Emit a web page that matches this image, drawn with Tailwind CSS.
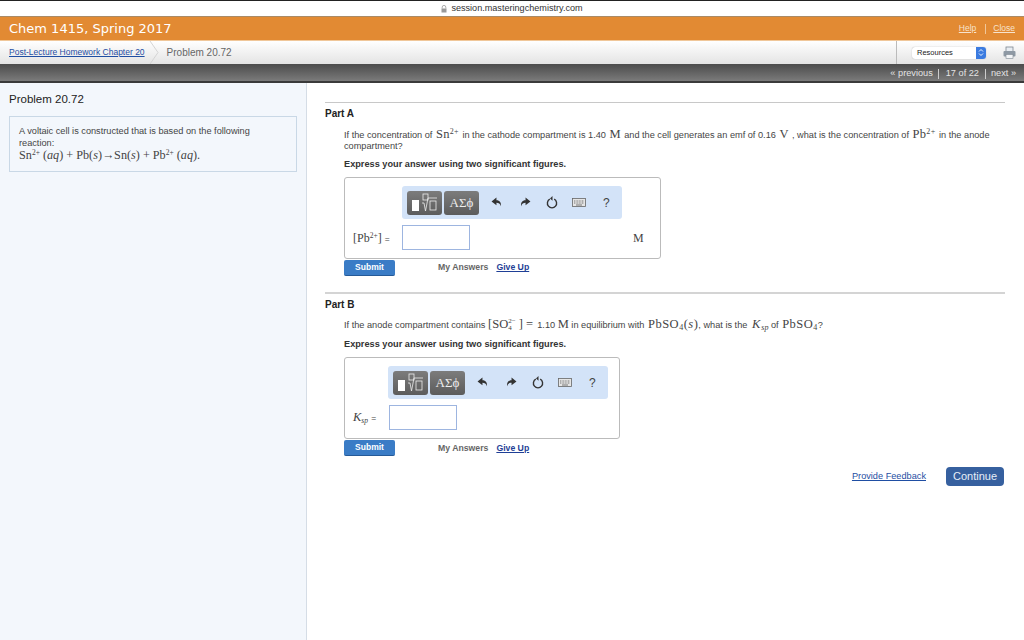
<!DOCTYPE html>
<html lang="en">
<head>
    <meta charset="UTF-8">
    <title>Chem 1415, Spring 2017</title>
    <script src="https://cdn.jsdelivr.net/npm/@tailwindcss/browser@4"></script>
</head>
<body class="bg-white font-['Liberation_Sans',sans-serif] text-[#333]">
<div class="flex flex-col w-[1024px] h-[640px] overflow-hidden">

    <!-- browser address bar -->
    <div class="h-[16px] bg-white border-t border-[#222] flex items-center justify-center gap-[4px] text-[9.1px] text-[#333]">
        <svg width="6" height="8" viewBox="0 0 6 8"><path d="M1.2 3.5V2.2a1.8 1.8 0 0 1 3.6 0V3.5" fill="none" stroke="#999" stroke-width="0.8"/><rect x="0.5" y="3.5" width="5" height="4" fill="#999"/></svg>
        <span>session.masteringchemistry.com</span>
    </div>

    <!-- course header -->
    <div class="h-[25px] bg-[#e28a33] border-t border-[#a98a66] border-b-[#f0c79a] border-b flex items-center justify-between pl-[9px] pr-[9px]">
        <span class="font-['DejaVu_Sans',sans-serif] text-[13px] text-white">Chem 1415, Spring 2017</span>
        <div class="flex items-center text-[8.5px] text-[#f7e3cd]">
            <a class="underline">Help</a>
            <span class="w-px h-[10px] bg-[#f0c79a] ml-[9px] mr-[7px]"></span>
            <a class="underline">Close</a>
        </div>
    </div>

    <!-- breadcrumb -->
    <div class="h-[23px] bg-gradient-to-b from-white to-[#e4e4e4] flex items-center justify-between">
        <div class="flex items-center h-full pl-[9px]">
            <a class="text-[8.5px] text-[#1f4ea3] underline">Post-Lecture Homework Chapter 20</a>
            <svg class="ml-[4px]" width="10" height="23" viewBox="0 0 10 23"><path d="M1 0l8 11.5L1 23" fill="none" stroke="#d4d4d4"/></svg>
            <span class="ml-[8px] text-[10px] text-[#666]">Problem 20.72</span>
        </div>
        <div class="flex items-center h-full border-l border-[#bbb] pl-[15px] pr-[8px]">
            <div class="w-[74px] h-[12px] bg-white rounded-[3px] flex items-center justify-between text-[7.5px] text-[#222] pl-[5px] shadow-[0_0_1px_#999]">
                <span>Resources</span>
                <span class="w-[10px] h-full bg-[#3b7be0] rounded-r-[3px] flex items-center justify-center">
                    <svg width="6" height="9" viewBox="0 0 6 9"><path d="M1 3.5l2-2 2 2M1 5.5l2 2 2-2" fill="none" stroke="#fff" stroke-width="0.9"/></svg>
                </span>
            </div>
            <svg class="ml-[17px]" width="13" height="13" viewBox="0 0 13 13"><rect x="3" y="1" width="7" height="5" fill="#e8edf2" stroke="#7d8791" stroke-width="0.8"/><rect x="0.5" y="5" width="12" height="5.5" rx="1" fill="#8e99a4"/><rect x="3" y="8.5" width="7" height="4" fill="#f2f4f6" stroke="#7d8791" stroke-width="0.6"/></svg>
        </div>
    </div>

    <!-- pager bar -->
    <div class="h-[19px] bg-gradient-to-b from-[#4c4c4c] to-[#7b7b7b] border-b-2 border-[#3a3a3a] flex items-center justify-end pr-[8px] pt-[2px] text-[9.2px] text-[#e4e4e4]">
        <span>« previous</span>
        <span class="w-px h-[10px] bg-[#ccc] ml-[5px] mr-[7px]"></span>
        <span>17 of 22</span>
        <span class="w-px h-[10px] bg-[#ccc] ml-[6px] mr-[5px]"></span>
        <span>next »</span>
    </div>

    <div class="flex flex-1 min-h-0">

        <!-- problem sidebar -->
        <div class="w-[307px] bg-[#f3f7fc] border-r border-[#d5dde6] pl-[9px] pr-[9px]">
            <h1 class="text-[11.5px] leading-[14px] mt-[9px] text-[#222]">Problem 20.72</h1>
            <div class="mt-[10px] h-[56px] bg-[#f3f7fc] border border-[#c9d8e6] pl-[9px] pt-[9px] text-[9.2px] leading-[11.5px] text-[#444]">
                <p>A voltaic cell is constructed that is based on the following<br>reaction:</p>
                <p class="font-['Liberation_Serif',serif] text-[12.2px] leading-[12px] text-[#444]">Sn<sup class="text-[7.5px]">2+</sup> (<i>aq</i>) + Pb(<i>s</i>)→Sn(<i>s</i>) + Pb<sup class="text-[7.5px]">2+</sup> (<i>aq</i>).</p>
            </div>
        </div>

        <!-- parts -->
        <div class="flex-1 pl-[18px] pr-[19px] pt-[19px]">

            <!-- part A -->
            <div class="border-t border-[#c8c8c8]">
                <h2 class="text-[10px] font-bold leading-[12px] mt-[5px] text-[#222]">Part A</h2>
                <div class="ml-[19px]">
                    <p class="mt-[9px] w-[650px] text-[9.2px] leading-[11px] text-[#444]">If the concentration of <span class="mx-[1px] font-['Liberation_Serif',serif] text-[12.5px] tracking-[0.3px]">Sn<sup class="text-[8px]">2+</sup></span> in the cathode compartment is 1.40 <span class="mx-[1px] font-['Liberation_Serif',serif] text-[12.5px]">M</span> and the cell generates an emf of 0.16 <span class="mx-[1px] font-['Liberation_Serif',serif] text-[12.5px]">V</span> , what is the concentration of <span class="mx-[1px] font-['Liberation_Serif',serif] text-[12.5px] tracking-[0.3px]">Pb<sup class="text-[8px]">2+</sup></span> in the anode compartment?</p>
                    <p class="mt-[7px] text-[9.2px] leading-[11px] font-bold text-[#333]">Express your answer using two significant figures.</p>

                    <div class="mt-[7px] w-[317px] h-[82px] bg-white border border-[#bbb] rounded-[3px] pt-[8px]">
                        <div class="ml-[57px] w-[220px] h-[33px] bg-[#d3e3f8] rounded-[3px] flex items-center pl-[5px]">
                            <div class="w-[35px] h-[24px] bg-gradient-to-b from-[#7c7c7c] to-[#5c5c5c] rounded-[3px] flex items-center justify-center">
                                <svg width="29" height="20" viewBox="0 0 29 20"><rect x="2" y="7" width="7" height="11" fill="#fff"/><rect x="13" y="1" width="5" height="6" fill="none" stroke="#eee" stroke-width="0.8"/><path d="M12 10l2 0 1.5 8 2.5-13h9" fill="none" stroke="#eee" stroke-width="0.8"/><rect x="20" y="8" width="6" height="9" fill="none" stroke="#eee" stroke-width="0.8"/></svg>
                            </div>
                            <div class="ml-[2px] w-[35px] h-[24px] bg-gradient-to-b from-[#7c7c7c] to-[#5c5c5c] rounded-[3px] flex items-center justify-center font-['Liberation_Serif',serif] text-[13px] text-[#eee]">ΑΣϕ</div>
                            <svg class="ml-[12px]" width="12" height="11" viewBox="0 0 11 10"><path d="M5 0.5L0.5 4 5 7.5V5.3c2 0 3.4.8 4 3.2.6-3.2-1-5.5-4-5.5z" fill="#333"/></svg>
                            <svg class="ml-[16px]" width="12" height="11" viewBox="0 0 11 10"><path d="M6 0.5L10.5 4 6 7.5V5.3c-2 0-3.4.8-4 3.2-.6-3.2 1-5.5 4-5.5z" fill="#333"/></svg>
                            <svg class="ml-[15px]" width="12" height="13" viewBox="0 0 12 13"><path d="M3.8 3.2a4.6 4.6 0 1 0 4.4 0" fill="none" stroke="#333" stroke-width="1.4"/><path d="M6.5 0v4.8L4 2.4z" fill="#333"/></svg>
                            <svg class="ml-[14px]" width="14" height="9" viewBox="0 0 14 9"><rect x="0.5" y="0.5" width="13" height="8" fill="#e5e5e5" stroke="#666" stroke-width="0.8"/><path d="M2 3h10M2 5h10" stroke="#777" stroke-dasharray="1 0.6"/><path d="M4 7h6" stroke="#777"/></svg>
                            <span class="ml-[17px] text-[12px] text-[#444]">?</span>
                        </div>
                        <div class="flex items-center h-[25px] mt-[6px] pl-[8px]">
                            <span class="w-[49px] font-['Liberation_Serif',serif] text-[12px] text-[#444]">[Pb<sup class="text-[7.5px]">2+</sup>] <span class="font-['Liberation_Sans',sans-serif] text-[8.5px]">=</span></span>
                            <div class="w-[68px] h-[25px] bg-white border border-[#9db5e0]"></div>
                            <span class="ml-[163px] font-['Liberation_Serif',serif] text-[12px] text-[#444]">M</span>
                        </div>
                    </div>

                    <div class="flex items-center h-[16px] mt-[1px]">
                        <div class="w-[51px] h-[16px] bg-[#3a7cc6] border-b border-[#255a98] rounded-[2px] text-center text-[8.5px] leading-[15px] font-bold text-white">Submit</div>
                        <span class="ml-[43px] text-[8.7px] font-bold text-[#666]">My Answers</span>
                        <a class="ml-[8px] text-[8.7px] font-bold text-[#1f3f96] underline">Give Up</a>
                    </div>
                </div>
            </div>

            <!-- part B -->
            <div class="border-t-2 border-[#d4d4d4] mt-[16px]">
                <h2 class="text-[10px] font-bold leading-[12px] mt-[5px] text-[#222]">Part B</h2>
                <div class="ml-[19px]">
                    <p class="mt-[7px] text-[9.2px] leading-[13px] text-[#444]">If the anode compartment contains <span class="mr-[1px] font-['Liberation_Serif',serif] text-[12.5px]">[SO<span class="inline-flex flex-col align-middle text-[7px] leading-[7px]"><span>2−</span><span>4</span></span> ] = </span>1.10 <span class="font-['Liberation_Serif',serif] text-[12.5px]">M</span> in equilibrium with <span class="ml-[1px] font-['Liberation_Serif',serif] text-[12.5px] tracking-[0.5px]">PbSO<sub class="text-[8px]">4</sub>(<i>s</i>)</span>, what is the <span class="ml-[2px] font-['Liberation_Serif',serif] text-[12.5px]"><i>K<sub class="ml-[1px] text-[8px]">sp</sub></i></span> of <span class="ml-[1px] font-['Liberation_Serif',serif] text-[12.5px] tracking-[0.5px]">PbSO<sub class="text-[8px]">4</sub></span>?</p>
                    <p class="mt-[7px] text-[9.2px] leading-[11px] font-bold text-[#333]">Express your answer using two significant figures.</p>

                    <div class="mt-[7px] w-[276px] h-[82px] bg-white border border-[#bbb] rounded-[3px] pt-[8px]">
                        <div class="ml-[43px] w-[220px] h-[33px] bg-[#d3e3f8] rounded-[3px] flex items-center pl-[5px]">
                            <div class="w-[35px] h-[24px] bg-gradient-to-b from-[#7c7c7c] to-[#5c5c5c] rounded-[3px] flex items-center justify-center">
                                <svg width="29" height="20" viewBox="0 0 29 20"><rect x="2" y="7" width="7" height="11" fill="#fff"/><rect x="13" y="1" width="5" height="6" fill="none" stroke="#eee" stroke-width="0.8"/><path d="M12 10l2 0 1.5 8 2.5-13h9" fill="none" stroke="#eee" stroke-width="0.8"/><rect x="20" y="8" width="6" height="9" fill="none" stroke="#eee" stroke-width="0.8"/></svg>
                            </div>
                            <div class="ml-[2px] w-[35px] h-[24px] bg-gradient-to-b from-[#7c7c7c] to-[#5c5c5c] rounded-[3px] flex items-center justify-center font-['Liberation_Serif',serif] text-[13px] text-[#eee]">ΑΣϕ</div>
                            <svg class="ml-[12px]" width="12" height="11" viewBox="0 0 11 10"><path d="M5 0.5L0.5 4 5 7.5V5.3c2 0 3.4.8 4 3.2.6-3.2-1-5.5-4-5.5z" fill="#333"/></svg>
                            <svg class="ml-[16px]" width="12" height="11" viewBox="0 0 11 10"><path d="M6 0.5L10.5 4 6 7.5V5.3c-2 0-3.4.8-4 3.2-.6-3.2 1-5.5 4-5.5z" fill="#333"/></svg>
                            <svg class="ml-[15px]" width="12" height="13" viewBox="0 0 12 13"><path d="M3.8 3.2a4.6 4.6 0 1 0 4.4 0" fill="none" stroke="#333" stroke-width="1.4"/><path d="M6.5 0v4.8L4 2.4z" fill="#333"/></svg>
                            <svg class="ml-[14px]" width="14" height="9" viewBox="0 0 14 9"><rect x="0.5" y="0.5" width="13" height="8" fill="#e5e5e5" stroke="#666" stroke-width="0.8"/><path d="M2 3h10M2 5h10" stroke="#777" stroke-dasharray="1 0.6"/><path d="M4 7h6" stroke="#777"/></svg>
                            <span class="ml-[17px] text-[12px] text-[#444]">?</span>
                        </div>
                        <div class="flex items-center h-[25px] mt-[6px] pl-[8px]">
                            <span class="w-[36px] font-['Liberation_Serif',serif] text-[12.5px] text-[#444]"><i>K<sub class="text-[7.5px]">sp</sub></i> <span class="font-['Liberation_Sans',sans-serif] text-[8.5px]">=</span></span>
                            <div class="w-[68px] h-[25px] bg-white border border-[#9db5e0]"></div>
                        </div>
                    </div>

                    <div class="flex items-center h-[16px] mt-[1px]">
                        <div class="w-[51px] h-[16px] bg-[#3a7cc6] border-b border-[#255a98] rounded-[2px] text-center text-[8.5px] leading-[15px] font-bold text-white">Submit</div>
                        <span class="ml-[43px] text-[8.7px] font-bold text-[#666]">My Answers</span>
                        <a class="ml-[8px] text-[8.7px] font-bold text-[#1f3f96] underline">Give Up</a>
                    </div>
                </div>
            </div>

            <!-- footer links -->
            <div class="flex items-center justify-end mt-[11px] pr-[1px]">
                <a class="text-[9.2px] text-[#1f4ea3] underline">Provide Feedback</a>
                <div class="ml-[20px] w-[58px] h-[19px] bg-[#36609f] rounded-[4px] text-center text-[11px] leading-[19px] text-[#e6eef8]">Continue</div>
            </div>
        </div>
    </div>
</div>
</body>
</html>
